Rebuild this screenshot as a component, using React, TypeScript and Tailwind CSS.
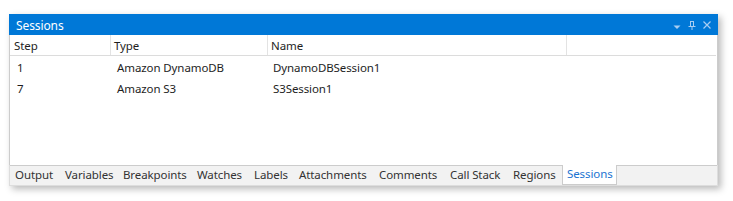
import React from "react";

const font = { fontFamily: '"Segoe UI", "Noto Sans", "Open Sans", sans-serif' };

const rows = [
  { step: "1", type: "Amazon DynamoDB", name: "DynamoDBSession1" },
  { step: "7", type: "Amazon S3", name: "S3Session1" },
];

const tabs: { label: string; w: string; active?: boolean }[] = [
  { label: "Output", w: "w-[50px]" },
  { label: "Variables", w: "w-[58px]" },
  { label: "Breakpoints", w: "w-[74px]" },
  { label: "Watches", w: "w-[57px]" },
  { label: "Labels", w: "w-[45px]" },
  { label: "Attachments", w: "w-[80px]" },
  { label: "Comments", w: "w-[71px]" },
  { label: "Call Stack", w: "w-[63px]" },
  { label: "Regions", w: "w-[54px]" },
  { label: "Sessions", w: "w-[55px]", active: true },
];

export default function App() {
  return (
    <div className="w-[733px] h-[201px] bg-white pt-[14px] pl-[9px]" style={font}>
      <div className="w-[709px] h-[172px] flex flex-col shadow-[3px_3px_7px_rgba(0,0,0,0.28)] text-[11.5px] tracking-[-0.1px] text-[#1e1e1e]">
        <div className="h-[21px] bg-[#0078d7] text-white flex items-center pl-[7px] pr-[7px] justify-between shrink-0">
          <span className="leading-none pt-[2px] text-[12px]">Sessions</span>
          <div className="flex items-center gap-[7px] pt-[1px]">
            <svg width="8" height="8" viewBox="0 0 8 8" className="mt-[3px]">
              <path d="M0.5 2.5 H7.5 L4 6 Z" fill="#a8cdf2" />
            </svg>
            <svg width="8" height="9" viewBox="0 0 8 9">
              <path d="M2 0.5 H6 M2.5 0.5 V5.5 M5.5 0.5 V5.5 M0.5 5.5 H7.5 M4 5.5 V9" stroke="#a8cdf2" strokeWidth="1" fill="none" />
            </svg>
            <svg width="8" height="8" viewBox="0 0 8 8">
              <path d="M0.5 0.5 L7.5 7.5 M7.5 0.5 L0.5 7.5" stroke="#a8cdf2" strokeWidth="1.2" fill="none" />
            </svg>
          </div>
        </div>
        <div className="flex-1 bg-white border-l border-r border-[#cccccc] flex flex-col min-h-0">
          <div className="h-[21px] flex border-b border-[#dcdcdc] mr-[1px] shrink-0">
            <div className="w-[101px] pl-[4px] pt-[2px] flex items-center border-r border-[#e3e3e3]">Step</div>
            <div className="w-[157px] pl-[3px] pt-[2px] flex items-center border-r border-[#e3e3e3]">Type</div>
            <div className="w-[299px] pl-[3px] pt-[2px] flex items-center border-r border-[#e3e3e3]">Name</div>
            <div className="flex-1" />
          </div>
          {rows.map((r) => (
            <div key={r.step} className="h-[21px] pt-[2px] flex items-center">
              <div className="w-[101px] pl-[7px]">{r.step}</div>
              <div className="w-[157px] pl-[6px]">{r.type}</div>
              <div className="w-[299px] pl-[5px]">{r.name}</div>
            </div>
          ))}
        </div>
        <div className="h-[21px] bg-[#f2f2f2] flex shrink-0 border-l border-r border-b border-[#dddddd]">
          {tabs.map((t) =>
            t.active ? (
              <div
                key={t.label}
                className={`${t.w} bg-white border-l border-r border-b border-[#cccccc] text-[#1a73d1] pl-[4px] pb-[1px] flex items-center`}
              >
                {t.label}
              </div>
            ) : (
              <div key={t.label} className={`${t.w} border-t border-[#cccccc] text-[#333333] pl-[5px] pb-[2px] flex items-center`}>
                {t.label}
              </div>
            )
          )}
          <div className="flex-1 border-t border-[#cccccc]" />
        </div>
      </div>
    </div>
  );
}
